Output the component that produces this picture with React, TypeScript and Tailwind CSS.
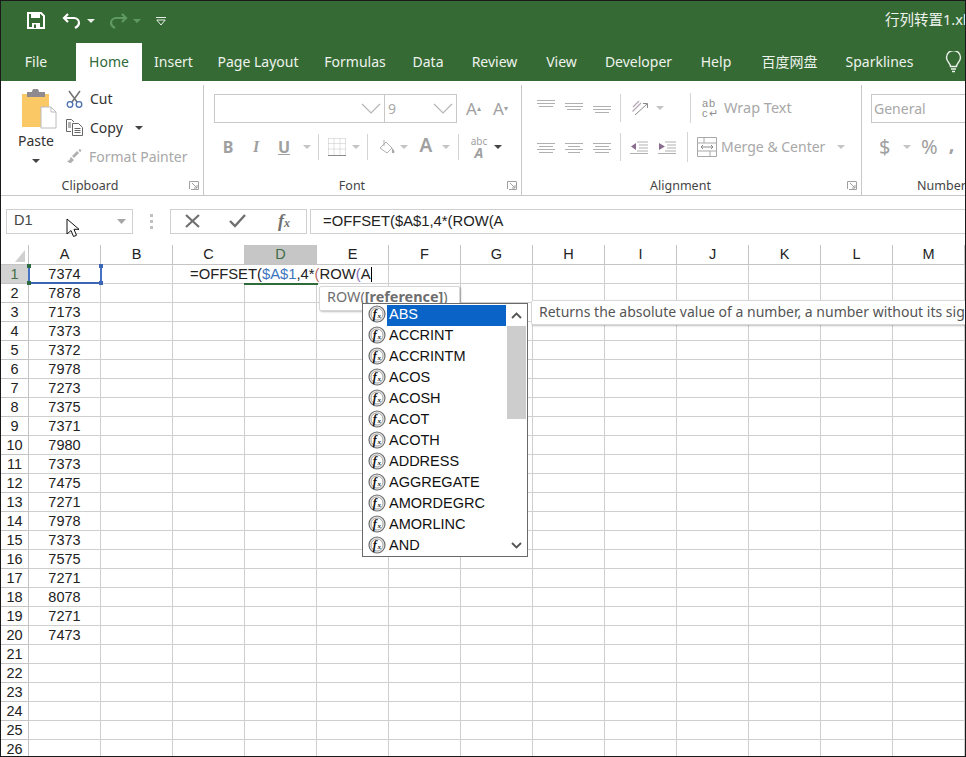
import { Fragment } from "react";
import type { ReactNode } from "react";

const UI_FONT = "[font-family:'Noto_Sans','Noto_Sans_CJK_SC',sans-serif]";
const CELL_FONT = "[font-family:'Liberation_Sans',sans-serif]";

const TABS = [
  { label: "Insert", width: "w-[63px]" },
  { label: "Page Layout", width: "w-[106px]" },
  { label: "Formulas", width: "w-[88px]" },
  { label: "Data", width: "w-[58px]" },
  { label: "Review", width: "w-[75px]" },
  { label: "View", width: "w-[59px]" },
  { label: "Developer", width: "w-[95px]" },
  { label: "Help", width: "w-[60px]" },
  { label: "百度网盘", width: "w-[87px]" },
  { label: "Sparklines", width: "w-[93px]" },
];

const COLUMNS = ["A", "B", "C", "D", "E", "F", "G", "H", "I", "J", "K", "L", "M", "N"];
const VALUES = [7374, 7878, 7173, 7373, 7372, 7978, 7273, 7375, 7371, 7980, 7373, 7475, 7271, 7978, 7373, 7575, 7271, 8078, 7271, 7473];
const ROWS = Array.from({ length: 27 }, (_, i) => i + 1);
const FUNCTIONS = ["ABS", "ACCRINT", "ACCRINTM", "ACOS", "ACOSH", "ACOT", "ACOTH", "ADDRESS", "AGGREGATE", "AMORDEGRC", "AMORLINC", "AND"];

function Caret({ dark = false, className = "" }: { dark?: boolean; className?: string }) {
  return (
    <svg width="8" height="4" viewBox="0 0 8 4" className={`shrink-0 ${className}`}>
      <path d="M0 0h8L4 4z" fill={dark ? "#444444" : "#c4c4c4"} />
    </svg>
  );
}

function Chevron() {
  return (
    <svg width="20" height="11" viewBox="0 0 20 11" className="shrink-0">
      <path d="M1 1l9 9 9-9" fill="none" stroke="#b5b5b5" strokeWidth="1.2" />
    </svg>
  );
}

function Launcher() {
  return (
    <svg width="10" height="9" viewBox="0 0 10 9" className="shrink-0">
      <path d="M.5 8V.5H9.5M9.5 1v7.5H2M3 2l5 5M8 4v3H5" fill="none" stroke="#a0a0a0" strokeWidth="1" />
    </svg>
  );
}

function Divider({ height = "h-[26px]" }: { height?: string }) {
  return <div className={`w-px ${height} bg-[#d4d4d4] shrink-0`} />;
}

function Lines({ widths, color = "#b0b0b0" }: { widths: number[]; color?: string }) {
  return (
    <svg width="18" height="11" viewBox="0 0 18 11" className="shrink-0">
      {widths.map((w, i) => (
        <path key={i} d={`M${(18 - w) / 2} ${1.5 + i * 3}h${w}`} stroke={color} strokeWidth="1" />
      ))}
    </svg>
  );
}

function PasteIcon() {
  return (
    <svg width="36" height="40" viewBox="0 0 36 40" className="shrink-0 ml-[6px]">
      <path d="M1 5h27v33H1z" fill="#fac864" />
      <path d="M6 3h5a3 3 0 0 1 7 0h6v5H6z" fill="#8f8a8f" />
      <path d="M20 18h10l5 5v16H20z" fill="#ffffff" stroke="#bcbcbc" />
      <path d="M30 18v5h5" fill="none" stroke="#bcbcbc" />
    </svg>
  );
}

function ScissorsIcon() {
  return (
    <svg width="17" height="18" viewBox="0 0 17 18" className="shrink-0">
      <path d="M3 1l8 11M14 1L6 12" stroke="#757575" strokeWidth="1.6" fill="none" />
      <circle cx="4" cy="14.5" r="2.8" fill="none" stroke="#4a6fb0" strokeWidth="1.3" />
      <circle cx="13" cy="14.5" r="2.8" fill="none" stroke="#4a6fb0" strokeWidth="1.3" />
    </svg>
  );
}

function CopyIcon() {
  return (
    <svg width="17" height="17" viewBox="0 0 17 17" className="shrink-0">
      <path d="M5 12.5H.5V.5h5l2.5 2.5" fill="#fff" stroke="#666666" />
      <path d="M6.5 4.5h6l4 4v8h-10z" fill="#fff" stroke="#666666" />
      <path d="M8.5 9.5h6M8.5 11.5h6M8.5 13.5h6M2 4h3M2 6h3M2 8h3" stroke="#666666" />
    </svg>
  );
}

function BrushIcon() {
  return (
    <svg width="16" height="15" viewBox="0 0 16 15" className="shrink-0">
      <path d="M6 7l5-5 2 2-5 5zM1 12c3 0 3-3 4-4l3 3-3 3c-1 .5-3-1-4-2z" fill="#b0b0b0" />
      <path d="M13 1l2 1" stroke="#b0b0b0" strokeWidth="2" />
    </svg>
  );
}

function FxGlobe() {
  return (
    <svg width="18" height="18" viewBox="0 0 18 18" className="shrink-0 -mt-[3px]">
      <circle cx="9" cy="9" r="8" fill="#e8e8e8" stroke="#6f6f6f" strokeWidth="1.2" />
      <circle cx="9" cy="9" r="6" fill="#ffffff" stroke="#a8a8a8" />
      <text x="4.8" y="12.5" fontFamily="Liberation Serif" fontStyle="italic" fontWeight="700" fontSize="12" fill="#111111">f</text>
      <text x="9.6" y="13" fontFamily="Liberation Serif" fontStyle="italic" fontWeight="700" fontSize="7" fill="#111111">x</text>
    </svg>
  );
}

function GhostButton({ children, className = "" }: { children: ReactNode; className?: string }) {
  return <span className={`text-[#a8a8a8] leading-none ${className}`}>{children}</span>;
}

function RibbonGroup({ width, label, labelPad, launcher = true, children }: { width: string; label: string; labelPad: string; launcher?: boolean; children: ReactNode }) {
  return (
    <div className={`${width} shrink-0 h-[110px] mt-[4px] border-r border-[#c8c8c8] flex flex-col relative`}>
      <div className="flex-1 min-h-0">{children}</div>
      <div className={`h-[18px] flex items-center justify-center text-[12.5px] text-[#444444] whitespace-nowrap ${labelPad}`}>
        <span>{label}</span>
      </div>
      {launcher && (
        <div className="absolute right-[4px] bottom-[5px] flex">
          <Launcher />
        </div>
      )}
    </div>
  );
}

function TitleBar() {
  return (
    <div className="h-[42px] bg-[#366a34] flex items-center pl-[26px]">
      <svg width="18" height="17" viewBox="0 0 18 17" className="shrink-0 -mt-[4px]">
        <path d="M1 1h13l3 3v12H1z" fill="none" stroke="#ffffff" strokeWidth="2" />
        <path d="M4 1h9v5H4zM5 11h8v5H5z" fill="#ffffff" />
        <path d="M7 12.5h2v3.5H7z" fill="#366a34" />
      </svg>
      <svg width="20" height="17" viewBox="0 0 20 17" className="ml-[17px] shrink-0 -mt-[2px]">
        <path d="M6 1L2 5l4 4" fill="none" stroke="#ffffff" strokeWidth="2.2" />
        <path d="M2.5 5H12a5 5 0 0 1 5 5c0 3-2 4-4 5" fill="none" stroke="#ffffff" strokeWidth="2.2" />
      </svg>
      <svg width="8" height="4" viewBox="0 0 8 4" className="ml-[5px] shrink-0 -mt-[2px]">
        <path d="M0 0h8L4 4z" fill="#e8efe8" />
      </svg>
      <svg width="20" height="17" viewBox="0 0 20 17" className="ml-[13px] shrink-0 -mt-[2px]">
        <path d="M14 1l4 4-4 4" fill="none" stroke="#5f9a63" strokeWidth="2.2" />
        <path d="M17.5 5H8a5 5 0 0 0-5 5c0 3 2 4 4 5" fill="none" stroke="#5f9a63" strokeWidth="2.2" />
      </svg>
      <svg width="8" height="4" viewBox="0 0 8 4" className="ml-[5px] shrink-0 -mt-[2px]">
        <path d="M0 0h8L4 4z" fill="#5f9a63" />
      </svg>
      <svg width="10" height="9" viewBox="0 0 10 9" className="ml-[15px] shrink-0 -mt-[1px]">
        <path d="M0 .5h10M.8 3l4.2 5 4.2-5z" fill="none" stroke="#e8efe8" />
      </svg>
      <span className="ml-auto text-[14.5px] text-[#eef3ee] whitespace-nowrap w-[80px] overflow-hidden -mt-[5px]">行列转置1.xlsx</span>
    </div>
  );
}

function TabBar() {
  return (
    <div className="h-[38px] bg-[#366a34] flex items-stretch pl-[11px] text-[14px] text-[#edf3ed]">
      <div className="w-[50px] flex items-center justify-center -ml-[1px] mr-[1px] pb-[2px]">File</div>
      <div className="ml-[14px] w-[66px] bg-white text-[#2f6a3a] flex items-center justify-center pb-[2px]">Home</div>
      {TABS.map((tab) => (
        <div key={tab.label} className={`${tab.width} flex items-center justify-center whitespace-nowrap pb-[2px]`}>
          {tab.label}
        </div>
      ))}
      <div className="ml-[19px] flex items-center">
        <svg width="17" height="22" viewBox="0 0 17 22">
          <path d="M5.5 15.5c0-3-4-5-4-9a7 7 0 0 1 14 0c0 4-4 6-4 9z" fill="none" stroke="#eef3ee" strokeWidth="1.4" />
          <path d="M6 18h5M7 20.5h3" stroke="#eef3ee" strokeWidth="1.4" />
        </svg>
      </div>
    </div>
  );
}

function Clipboard() {
  return (
    <div className="flex h-full pl-[15px]">
      <div className="w-[40px] flex flex-col items-center pt-[4px]">
        <PasteIcon />
        <span className="text-[14px] text-[#333333] leading-none mt-[5px]">Paste</span>
        <Caret dark className="mt-[11px]" />
      </div>
      <div className="ml-[10px] flex flex-col -mt-[1px] text-[14px] text-[#333333]">
        <div className="h-[29px] flex items-center gap-[7px]">
          <ScissorsIcon />
          <span>Cut</span>
        </div>
        <div className="h-[29px] flex items-center gap-[7px]">
          <CopyIcon />
          <span>Copy</span>
          <Caret dark className="ml-[5px]" />
        </div>
        <div className="h-[29px] flex items-center gap-[7px] text-[#a8a8a8] whitespace-nowrap">
          <BrushIcon />
          <span>Format Painter</span>
        </div>
      </div>
    </div>
  );
}

function Font() {
  return (
    <div className="flex flex-col pl-[10px] h-full">
      <div className="flex items-center mt-[9px]">
        <div className="w-[171px] h-[29px] border border-[#c8c8c8] flex items-center justify-end pr-[3px]">
          <Chevron />
        </div>
        <div className="w-[72px] h-[29px] border border-l-0 border-[#c8c8c8] flex items-center justify-between pl-[3px] pr-[3px] text-[14px] text-[#a8a8a8]">
          <span>9</span>
          <Chevron />
        </div>
        <span className="ml-[9px] w-[27px] text-[17px] text-[#a0a0a0] leading-none">
          A<sup className="text-[8px]">▴</sup>
        </span>
        <span className="text-[17px] text-[#a0a0a0] leading-none">
          A<sup className="text-[8px]">▾</sup>
        </span>
      </div>
      <div className="flex items-center mt-[9px] h-[30px]">
        <span className="w-[26px] text-center text-[16px] font-bold text-[#a0a0a0] ml-[1px]">B</span>
        <span className="w-[30px] text-center text-[16px] font-bold italic text-[#a0a0a0] [font-family:'Liberation_Serif',serif]">I</span>
        <span className="w-[26px] text-center text-[16px] font-bold underline text-[#a0a0a0]">U</span>
        <Caret className="ml-[6px]" />
        <div className="ml-[7px]"><Divider /></div>
        <svg width="18" height="18" viewBox="0 0 18 18" className="ml-[9px] shrink-0">
          <path d="M.5.5h17M.5 5.5h17M.5 11h17M.5.5v17M6 .5v17M12 .5v17M17.5.5v17" stroke="#c4c4c4" strokeDasharray="1 1" fill="none" />
          <path d="M0 17.5h18" stroke="#8a8a8a" />
        </svg>
        <Caret className="ml-[6px]" />
        <div className="ml-[7px]"><Divider /></div>
        <svg width="18" height="17" viewBox="0 0 18 17" className="ml-[10px] shrink-0">
          <path d="M2 9l6-6 6 6-5 5z" fill="#fff" stroke="#b0b0b0" />
          <path d="M6 1v6" stroke="#b0b0b0" />
          <path d="M14 9c2 2 2.5 3 2.5 4a1.3 1.3 0 0 1-2.6 0c0-1 0-3 .1-4z" fill="#a8a8a8" />
        </svg>
        <Caret className="ml-[4px]" />
        <span className="ml-[10px] w-[16px] text-center text-[19px] font-semibold text-[#a0a0a0] leading-none -mt-[3px]">A</span>
        <Caret className="ml-[8px]" />
        <div className="ml-[8px]"><Divider /></div>
        <div className="ml-[11px] w-[18px] flex flex-col items-center leading-none text-[#a0a0a0]">
          <span className="text-[10px] h-[10px] leading-[10px]">abc</span>
          <span className="text-[14px] h-[13px] leading-[13px] font-bold italic">A</span>
        </div>
        <Caret dark className="ml-[6px]" />
      </div>
    </div>
  );
}

function Alignment() {
  return (
    <div className="flex flex-col h-full">
      <div className="flex items-center h-[30px] mt-[8px] pl-[15px]">
        <div className="-mt-[8px]"><Lines widths={[18, 18, 14]} /></div>
        <div className="ml-[10px] -mt-[2px]"><Lines widths={[18, 18, 14]} /></div>
        <div className="ml-[10px] mt-[4px]"><Lines widths={[18, 18, 14]} /></div>
        <div className="ml-[9px]"><Divider height="h-[28px]" /></div>
        <svg width="20" height="18" viewBox="0 0 20 18" className="ml-[9px] shrink-0">
          <path d="M3 8l6-6M5 10l6-6M2.5 12.5l6-6" stroke="#b5a8b5" strokeWidth="1.2" />
          <path d="M5 16L17 5M13 4.5h4.5V9" fill="none" stroke="#8a8a8a" />
        </svg>
        <Caret className="ml-[6px]" />
        <div className="ml-[26px]"><Divider height="h-[30px]" /></div>
        <div className="ml-[11px] w-[17px] flex flex-col shrink-0 text-[#8f8f8f] [font-family:'Liberation_Sans',sans-serif]">
          <span className="text-[11px] h-[9px] leading-[9px] tracking-[1px]">ab</span>
          <span className="text-[11px] h-[9px] leading-[9px] tracking-[1px] mt-[1px]">c↵</span>
        </div>
        <GhostButton className="ml-[5px] -mt-[2px] text-[14.5px] whitespace-nowrap">Wrap Text</GhostButton>
      </div>
      <div className="flex items-center h-[30px] mt-[9px] pl-[15px]">
        <Lines widths={[18, 14, 18, 14]} />
        <div className="ml-[10px]"><Lines widths={[18, 12, 18, 12]} /></div>
        <div className="ml-[10px]"><Lines widths={[18, 14, 18, 14]} /></div>
        <div className="ml-[9px]"><Divider height="h-[28px]" /></div>
        <svg width="18" height="14" viewBox="0 0 18 14" className="ml-[9px] shrink-0">
          <path d="M7 2h11M9 5h9M9 8h9M7 11h11" stroke="#b0b0b0" />
          <path d="M6 3L1 6.5 6 10z" fill="#8c6d92" />
          <path d="M0 13.5h18" stroke="#b0b0b0" />
        </svg>
        <svg width="18" height="14" viewBox="0 0 18 14" className="ml-[10px] shrink-0">
          <path d="M7 2h11M9 5h9M9 8h9M7 11h11" stroke="#b0b0b0" />
          <path d="M1 3l6 3.5L1 10z" fill="#8c6d92" />
          <path d="M0 13.5h18" stroke="#b0b0b0" />
        </svg>
        <div className="ml-[11px]"><Divider height="h-[30px]" /></div>
        <svg width="20" height="20" viewBox="0 0 20 20" className="ml-[9px] shrink-0">
          <path d="M.5.5h19v19H.5zM.5 6h19M.5 14h19M7 .5V6M13 14v5.5" fill="none" stroke="#a8a8a8" />
          <path d="M4 10h12M6 8l-2 2 2 2M14 8l2 2-2 2" fill="none" stroke="#8a8a8a" />
        </svg>
        <GhostButton className="ml-[4px] text-[14px] whitespace-nowrap">Merge &amp; Center</GhostButton>
        <Caret className="ml-[12px]" />
      </div>
    </div>
  );
}

function NumberGroup() {
  return (
    <div className="flex flex-col h-full pl-[9px]">
      <div className="mt-[9px] w-[120px] h-[29px] border border-[#c8c8c8] flex items-center pl-[2px] text-[14px] text-[#a8a8a8]">General</div>
      <div className="flex items-center mt-[9px] h-[30px] text-[#a0a0a0]">
        <span className="ml-[8px] w-[14px] text-[20px] leading-none">$</span>
        <Caret className="ml-[10px]" />
        <span className="ml-[10px] text-[20px] leading-none">%</span>
        <span className="ml-[11px] text-[20px] font-bold leading-none -mt-[6px]">,</span>
      </div>
    </div>
  );
}

function FormulaBar() {
  return (
    <div className="h-[49px] bg-white flex items-center pl-[5px] pt-[1px]">
      <div className={`w-[127px] h-[25px] border border-[#d0d0d0] flex items-center justify-between pl-[7px] pr-[6px] text-[14.5px] text-[#444444] ${CELL_FONT}`}>
        <span>D1</span>
        <svg width="9" height="5" viewBox="0 0 9 5"><path d="M0 0h9L4.5 5z" fill="#a6a6a6" /></svg>
      </div>
      <div className="w-[4px] ml-[17px] flex flex-col gap-[3px] shrink-0">
        <div className="w-[3px] h-[3px] bg-[#c0c0c0]" />
        <div className="w-[3px] h-[3px] bg-[#c0c0c0]" />
        <div className="w-[3px] h-[3px] bg-[#c0c0c0]" />
      </div>
      <div className="ml-[16px] w-[137px] h-[25px] border border-[#d0d0d0] flex items-center justify-between pl-[14px] pr-[16px]">
        <svg width="15" height="14" viewBox="0 0 15 14"><path d="M1 1l13 12M14 1L1 13" stroke="#707070" strokeWidth="2.2" /></svg>
        <svg width="17" height="14" viewBox="0 0 17 14" className="-ml-[3px]"><path d="M1 7l5 5L16 1" fill="none" stroke="#707070" strokeWidth="2.4" /></svg>
        <span className="text-[18px] leading-none text-[#707070] italic font-bold [font-family:'Liberation_Serif',serif]">f<span className="text-[12px]">x</span></span>
      </div>
      <div className={`ml-[3px] flex-1 h-[25px] border border-r-0 border-[#d0d0d0] flex items-center pl-[12px] text-[14.8px] text-[#222222] ${CELL_FONT}`}>
        =OFFSET($A$1,4*(ROW(A
      </div>
    </div>
  );
}

function Sheet() {
  return (
    <div className={`relative text-[14.5px] text-[#222222] ${CELL_FONT}`}>
      <div className="grid grid-cols-[28px_repeat(14,72px)] grid-rows-[20px_repeat(27,19px)]">
        <div className="border-r border-b border-[#c4c4c4] flex items-end justify-end pr-[3px] pb-[2px]">
          <svg width="10" height="12" viewBox="0 0 10 12"><path d="M10 0v12H0z" fill="#d0d0d0" /></svg>
        </div>
        {COLUMNS.map((col) => (
          <div
            key={col}
            className={`flex items-center justify-center pt-[1px] border-r border-b border-[#c4c4c4] ${col === "D" ? "bg-[#c6c6c6] text-[#3f6d45]" : ""}`}
          >
            {col}
          </div>
        ))}
        {ROWS.map((row) => (
          <Fragment key={row}>
            <div
              className={`flex items-center justify-center pt-[1px] border-r border-b border-[#c4c4c4] ${row === 1 ? "bg-[#d2d2d2] text-[#3f6d45]" : ""}`}
            >
              {row}
            </div>
            {COLUMNS.map((col) => (
              <div key={col + row} className="flex items-center justify-center pt-[1px] border-r border-b border-[#cfcfcf]">
                {col === "A" && VALUES[row - 1]}
              </div>
            ))}
          </Fragment>
        ))}
      </div>

      {/* range highlight on A1 */}
      <div className="absolute left-[27px] top-[20px] w-[74px] h-[19px] border-x-2 border-b-2 border-x-[#4472c4] border-b-[#3a66b5]">
        <div className="absolute -left-[3px] -top-[1px] w-[4px] h-[4px] bg-[#2d6a42]" />
        <div className="absolute -right-[3px] -top-[1px] w-[4px] h-[4px] bg-[#3a66b5]" />
        <div className="absolute -left-[3px] -bottom-[3px] w-[4px] h-[4px] bg-[#2d6a42]" />
        <div className="absolute -right-[3px] -bottom-[3px] w-[4px] h-[4px] bg-[#3a66b5]" />
      </div>

      {/* text being typed in D1 spills over its neighbours */}
      <div className="absolute left-[189px] top-[20px] h-[18px] flex items-center whitespace-nowrap bg-white pr-[1px] text-[14.8px]">
        <span>=OFFSET(</span>
        <span className="text-[#3c74bd]">$A$1</span>
        <span>,4*</span>
        <span className="text-[#b5685f]">(</span>
        <span>ROW</span>
        <span className="text-[#8a6fb5]">(</span>
        <span>A</span>
        <span className="w-px h-[15px] bg-black" />
      </div>
      <div className="absolute left-[243px] top-[38px] w-[74px] h-[2px] bg-[#2f6a3a]" />
    </div>
  );
}

function ArgHint() {
  return (
    <div className="absolute left-[318px] top-[285px] w-[141px] h-[25px] bg-white border border-[#d8d8d8] rounded-[2px] shadow-[1px_1px_2px_rgba(0,0,0,0.25)] pl-[7px] pb-[3px] flex items-center text-[14.4px] text-[#6e6e6e] whitespace-nowrap">
      ROW(<span className="font-bold">[reference]</span>)
    </div>
  );
}

function FunctionList() {
  return (
    <div className={`absolute left-[361px] top-[302px] w-[166px] h-[254px] bg-white border border-[#6a6a6a] flex text-[14.5px] text-[#111111] ${CELL_FONT}`}>
      <div className="w-[143px] pt-[1px] pl-[5px]">
        {FUNCTIONS.map((name, i) => (
          <div key={name} className="h-[21px] flex items-center gap-[1px]">
            <FxGlobe />
            <span className={`flex-1 h-full flex items-center pl-[2px] pb-[2px] ${i === 0 ? "bg-[#0a64c8] text-white" : ""}`}>{name}</span>
          </div>
        ))}
      </div>
      <div className="w-[19px] ml-[1px] pt-[1px] flex flex-col">
        <div className="h-[21px] flex items-center justify-center">
          <svg width="11" height="7" viewBox="0 0 11 7"><path d="M1 6l4.5-4.5L10 6" fill="none" stroke="#555555" strokeWidth="1.8" /></svg>
        </div>
        <div className="h-[93px] bg-[#cdcdcd]" />
        <div className="flex-1" />
        <div className="h-[21px] flex items-center justify-center">
          <svg width="11" height="7" viewBox="0 0 11 7"><path d="M1 1l4.5 4.5L10 1" fill="none" stroke="#555555" strokeWidth="1.8" /></svg>
        </div>
      </div>
    </div>
  );
}

export default function App() {
  return (
    <div className={`relative w-[966px] h-[757px] overflow-hidden bg-white border border-[#1a1a1a] ${UI_FONT}`}>
      <TitleBar />
      <TabBar />
      <div className="h-[115px] flex border-b border-[#c8c8c8] bg-white overflow-hidden">
        <RibbonGroup width="w-[203px]" label="Clipboard" labelPad="pr-[24px]"><Clipboard /></RibbonGroup>
        <RibbonGroup width="w-[318px]" label="Font" labelPad="pr-[21px]"><Font /></RibbonGroup>
        <RibbonGroup width="w-[340px]" label="Alignment" labelPad="pr-[22px]"><Alignment /></RibbonGroup>
        <RibbonGroup width="w-[160px]" label="Number" labelPad="" launcher={false}><NumberGroup /></RibbonGroup>
      </div>
      <FormulaBar />
      <Sheet />
      <ArgHint />
      <FunctionList />
      <div className="absolute left-[530px] top-[299px] w-[460px] h-[25px] bg-white border border-[#d8d8d8] rounded-[2px] shadow-[1px_1px_2px_rgba(0,0,0,0.25)] pl-[7px] pb-[2px] flex items-center text-[14px] text-[#555555] whitespace-nowrap">
        Returns the absolute value of a number, a number without its sign
      </div>
      <svg width="14" height="21" viewBox="0 0 14 21" className="absolute left-[65px] top-[217px]">
        <path d="M1 1v15l4-3.5 2.5 6 3-1.2-2.5-6H13z" fill="#ffffff" stroke="#111111" strokeWidth="1" />
      </svg>
    </div>
  );
}
